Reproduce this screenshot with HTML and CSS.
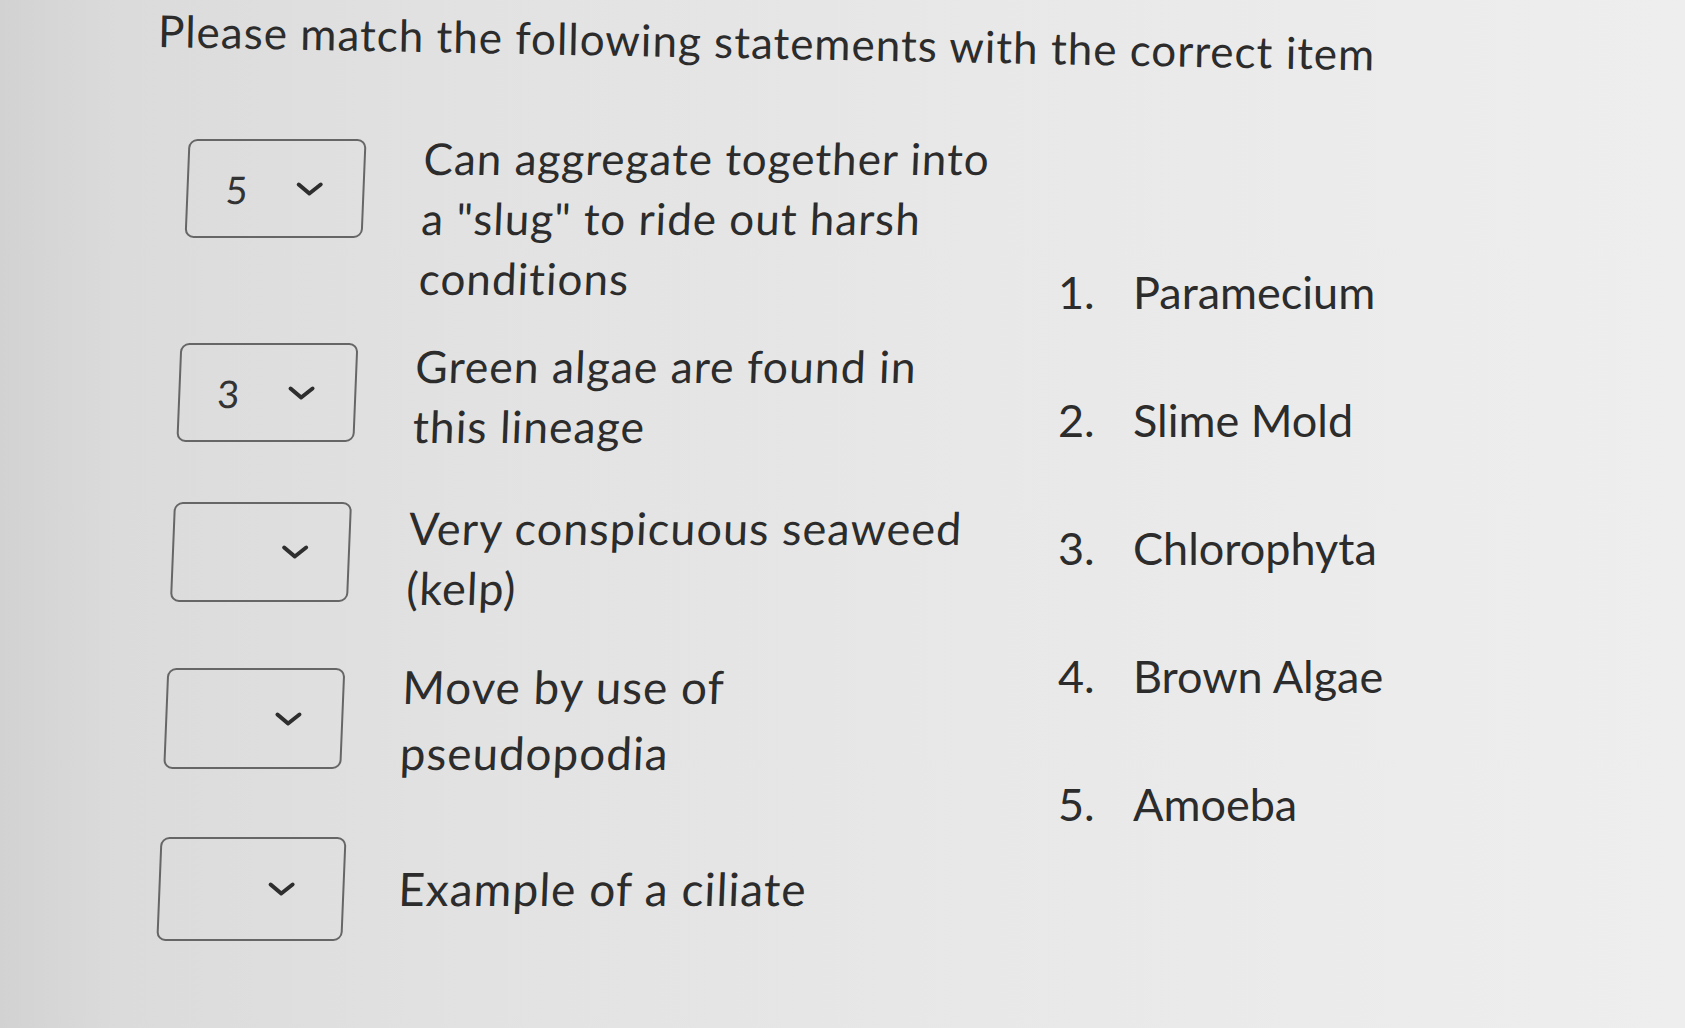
FILE: index.html
```html
<!DOCTYPE html>
<html lang="en">
<head>
<meta charset="utf-8">
<title>Matching question</title>
<link rel="stylesheet" href="styles.css">
</head>
<body>
<main class="question">
  <h1 class="prompt">Please match the following statements with the correct item</h1>
  <div class="match">
    <div class="pairs">
      <div class="pair pair--first">
        <div class="select"><span class="value">5</span><svg class="chev" viewBox="0 0 28 16"><polyline points="3,3.5 14,12.5 25,3.5"/></svg></div>
        <p class="statement">Can aggregate together into<br>a "slug" to ride out harsh<br>conditions</p>
      </div>
      <div class="pair pair--second">
        <div class="select"><span class="value">3</span><svg class="chev" viewBox="0 0 28 16"><polyline points="3,3.5 14,12.5 25,3.5"/></svg></div>
        <p class="statement">Green algae are found in<br>this lineage</p>
      </div>
      <div class="pair pair--third">
        <div class="select"><span class="value"></span><svg class="chev" viewBox="0 0 28 16"><polyline points="3,3.5 14,12.5 25,3.5"/></svg></div>
        <p class="statement">Very conspicuous seaweed<br>(kelp)</p>
      </div>
      <div class="pair pair--fourth">
        <div class="select"><span class="value"></span><svg class="chev" viewBox="0 0 28 16"><polyline points="3,3.5 14,12.5 25,3.5"/></svg></div>
        <p class="statement">Move by use of<br>pseudopodia</p>
      </div>
      <div class="pair pair--last">
        <div class="select"><span class="value"></span><svg class="chev" viewBox="0 0 28 16"><polyline points="3,3.5 14,12.5 25,3.5"/></svg></div>
        <p class="statement">Example of a ciliate</p>
      </div>
    </div>
    <ol class="options">
      <li><span class="num">1.</span><span>Paramecium</span></li>
      <li><span class="num">2.</span><span>Slime Mold</span></li>
      <li><span class="num">3.</span><span>Chlorophyta</span></li>
      <li><span class="num">4.</span><span>Brown Algae</span></li>
      <li><span class="num">5.</span><span>Amoeba</span></li>
    </ol>
  </div>
</main>
</body>
</html>
```
FILE: styles.css
```css
html, body {
  margin: 0;
  height: 100%;
}

body {
  background: linear-gradient(90deg, #d2d2d2 0%, #dbdbdb 7%, #e2e2e2 28%, #e8e8e8 58%, #ececec 85%, #eeeeee 100%);
  font-family: Lato, "Noto Sans", sans-serif;
  color: #2c2c2c;
  overflow: hidden;
}

.question {
  padding: 4px 0 0 158px;
}

.prompt {
  margin: 0;
  font-size: 44px;
  font-weight: 400;
  letter-spacing: 1px;
  line-height: 52px;
  white-space: nowrap;
  transform: rotate(1.1deg);
  transform-origin: 0 50%;
}

.match {
  display: flex;
  margin-top: 72px;
}

.pairs {
  flex: 0 0 869px;
  margin-left: 31px;
  display: flex;
  flex-direction: column;
  transform: skewX(-2.3deg);
  transform-origin: 0 0;
}

.pair {
  display: flex;
  align-items: flex-start;
}

.select {
  flex: 0 0 auto;
  box-sizing: border-box;
  width: 178px;
  height: 99px;
  margin-top: 11px;
  border: 2px solid #666;
  border-radius: 9px;
  display: flex;
  align-items: center;
  padding-left: 37px;
}

.value {
  width: 70px;
  font-size: 38px;
  line-height: 40px;
  color: #333;
}

.chev {
  width: 28px;
  height: 16px;
}

.chev polyline {
  fill: none;
  stroke: #2e2e2e;
  stroke-width: 4;
  stroke-linecap: round;
  stroke-linejoin: round;
}

.statement {
  margin: 0 0 0 58px;
  font-size: 44px;
  letter-spacing: 1px;
  line-height: 60px;
  white-space: nowrap;
}

/* rows grow slightly towards the bottom of the screen */
.pair--second {
  margin-top: 28px;
}
.pair--second .select {
  margin-top: 7px;
}
.pair--second .statement {
  font-size: 44.5px;
}

.pair--third {
  margin-top: 42px;
}
.pair--third .select {
  margin-top: 4px;
  height: 100px;
}
.pair--third .statement {
  font-size: 45px;
}

.pair--fourth {
  margin-top: 36px;
}
.pair--fourth .select {
  margin-top: 14px;
  height: 101px;
}
.pair--fourth .statement {
  font-size: 45.8px;
  line-height: 66px;
}

.pair--last {
  margin-top: 51px;
  align-items: center;
}
.pair--last .select {
  margin-top: 0;
  width: 186px;
  height: 104px;
}
.pair--last .statement {
  margin-left: 54px;
  font-size: 46px;
}

.options {
  list-style: none;
  margin: 0;
  padding: 137px 0 0 0;
}

.options li {
  display: flex;
  font-size: 45px;
  line-height: 54px;
  margin-bottom: 74px;
  white-space: nowrap;
}

.num {
  width: 75px;
}
```
